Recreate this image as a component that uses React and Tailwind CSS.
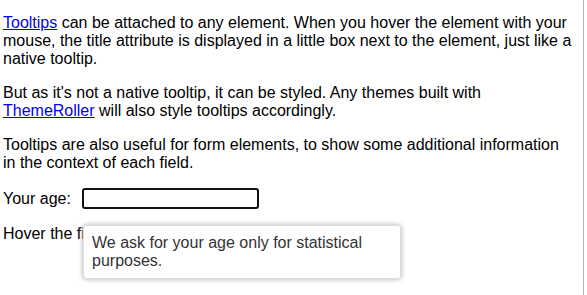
import React from "react";

function Tooltip({ children }) {
  return (
    <div className="absolute left-[83px] top-[225px] w-[318px] rounded-[3px] border border-[#dddddd] bg-white p-2 text-[16px] leading-[18px] text-[#333333] shadow-[0_0_5px_#aaaaaa]">
      {children}
    </div>
  );
}

export default function App() {
  return (
    <div className="relative h-[295px] w-[587px] bg-white font-['Liberation_Sans',Arial,sans-serif] text-[16px] leading-[18px] text-black">
      <div className="h-full w-[584px] border-r border-[#b4b4b4] pl-[3px] pr-[10px] pt-[14px]">
        <p className="mb-4">
          <a href="#" className="text-[#0000ee] underline">
            Tooltips
          </a>{" "}
          can be attached to any element. When you hover the element with your
          mouse, the title attribute is displayed in a little box next to the
          element, just like a native tooltip.
        </p>
        <p className="mb-4">
          But as it's not a native tooltip, it can be styled. Any themes built
          with{" "}
          <a href="#" className="text-[#0000ee] underline">
            ThemeRoller
          </a>{" "}
          will also style tooltips accordingly.
        </p>
        <p className="mb-4">
          Tooltips are also useful for form elements, to show some additional
          information in the context of each field.
        </p>
        <p className="mb-4 flex items-center">
          <label>Your age:</label>
          <input
            className="ml-[11px] h-[21px] w-[177px] rounded-[3px] border-2 border-[#111111] bg-white outline-none"
            defaultValue=""
          />
        </p>
        <p>Hover the field to see the tooltip.</p>
      </div>
      <Tooltip>We ask for your age only for statistical purposes.</Tooltip>
    </div>
  );
}
